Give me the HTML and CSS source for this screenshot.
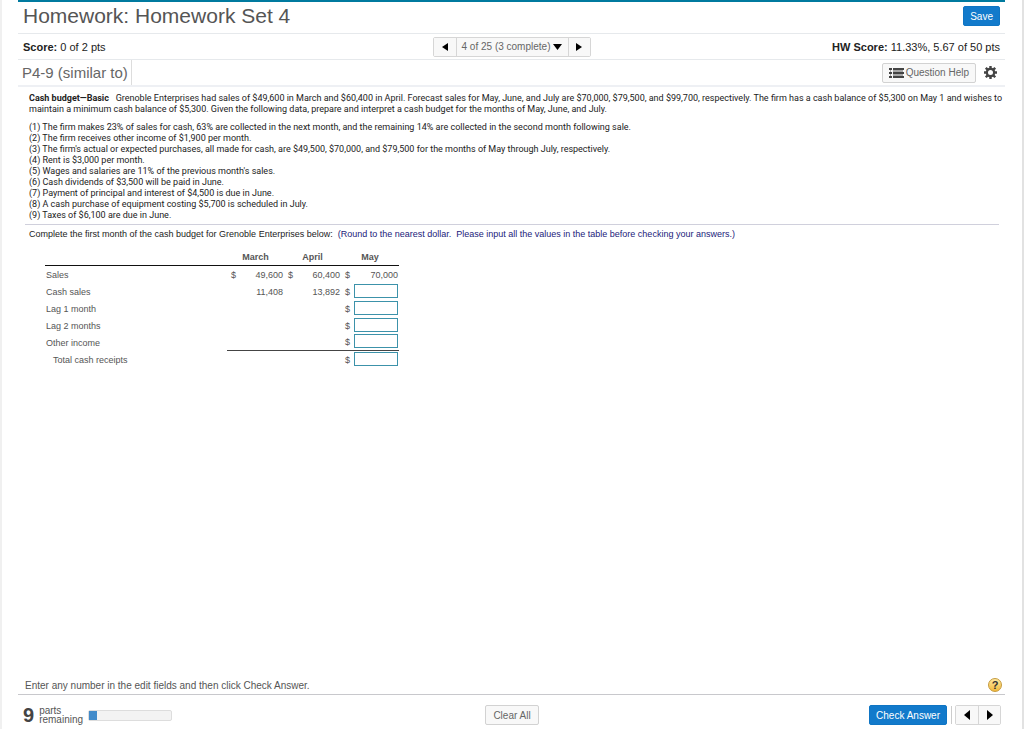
FILE: index.html
```html
<!DOCTYPE html>
<html lang="en">
<head>
  <meta charset="UTF-8">
  <meta name="viewport" content="width=device-width, initial-scale=1.0">
  <title>Homework Set 4</title>
  <link rel="stylesheet" href="styles.css">
</head>
<body>
  <div class="page">
    <header class="title-bar">
      <h1>Homework: Homework Set 4</h1>
      <button class="btn btn-primary" type="button">Save</button>
    </header>

    <div class="score-bar">
      <p><strong>Score:</strong> 0 of 2 pts</p>
      <div class="pager">
        <button type="button" aria-label="Previous question"><svg width="6" height="8" viewBox="0 0 6 8"><path d="M6 0v8L0 4z"/></svg></button>
        <button class="pager-menu" type="button">4 of 25 (3 complete) <svg width="9" height="6" viewBox="0 0 9 6"><path d="M0 0h9L4.500 6z"/></svg></button>
        <button type="button" aria-label="Next question"><svg width="6" height="8" viewBox="0 0 6 8"><path d="M0 0v8l6-4z"/></svg></button>
      </div>
      <p class="hw-score"><strong>HW Score:</strong> 11.33%, 5.67 of 50 pts</p>
    </div>

    <div class="question-bar">
      <h2>P4-9 (similar to)</h2>
      <div class="question-tools">
        <button class="btn help-btn" type="button">
          <svg width="15" height="10" viewBox="0 0 15 10"><path d="M0 0h3v2H0zM4 0h11v2H4zM0 4h3v2H0zM4 4h11v2H4zM0 8h3v2H0zM4 8h11v2H4z"/><path d="M1 0h1v10H1zM4 1h10v8H4z" opacity=".45"/></svg>
          Question Help
        </button>
        <button class="gear-btn" type="button" aria-label="Settings">
          <svg width="13" height="13" viewBox="0 0 14 14"><path fill-rule="evenodd" d="M5.700 0h2.600v2l1.400.5 1.500-1.400 1.800 1.800-1.500 1.500.5 1.300H14v2.600h-2l-.5 1.400 1.500 1.500-1.800 1.800-1.500-1.500-1.400.5V14H5.700v-2l-1.400-.5L2.800 13 1 11.200l1.500-1.500L2 8.300H0V5.700h2l.5-1.300L1 2.900l1.800-1.800 1.500 1.400L5.700 2zM7 4.300a2.700 2.700 0 1 0 0 5.400 2.700 2.700 0 0 0 0-5.400z"/></svg>
        </button>
      </div>
    </div>

    <main>
      <section class="problem">
        <p><strong>Cash budget—Basic</strong> &nbsp; Grenoble Enterprises had sales of $49,600 in March and $60,400 in April. Forecast sales for May, June, and July are $70,000, $79,500, and $99,700, respectively. The firm has a cash balance of $5,300 on May 1 and wishes to maintain a minimum cash balance of $5,300. Given the following data, prepare and interpret a cash budget for the months of May, June, and July.</p>
        <ul>
          <li>(1) The firm makes 23% of sales for cash, 63% are collected in the next month, and the remaining 14% are collected in the second month following sale.</li>
          <li>(2) The firm receives other income of $1,900 per month.</li>
          <li>(3) The firm's actual or expected purchases, all made for cash, are $49,500, $70,000, and $79,500 for the months of May through July, respectively.</li>
          <li>(4) Rent is $3,000 per month.</li>
          <li>(5) Wages and salaries are 11% of the previous month's sales.</li>
          <li>(6) Cash dividends of $3,500 will be paid in June.</li>
          <li>(7) Payment of principal and interest of $4,500 is due in June.</li>
          <li>(8) A cash purchase of equipment costing $5,700 is scheduled in July.</li>
          <li>(9) Taxes of $6,100 are due in June.</li>
        </ul>
      </section>

      <section class="answer">
        <p>Complete the first month of the cash budget for Grenoble Enterprises below: &nbsp;<span class="hint">(Round to the nearest dollar. &nbsp;Please input all the values in the table before checking your answers.)</span></p>

        <table class="budget">
          <colgroup>
            <col class="col-label">
            <col class="col-sign">
            <col class="col-value">
            <col class="col-sign">
            <col class="col-value">
            <col class="col-sign">
            <col class="col-input">
          </colgroup>
          <thead>
            <tr><td></td><td></td><th>March</th><td></td><th>April</th><td></td><th>May</th></tr>
          </thead>
          <tbody>
            <tr><th>Sales</th><td>$</td><td>49,600</td><td>$</td><td>60,400</td><td>$</td><td>70,000</td></tr>
            <tr><th><label for="cash">Cash sales</label></th><td></td><td>11,408</td><td></td><td>13,892</td><td>$</td><td class="field"><input type="text" id="cash"></td></tr>
            <tr><th><label for="lag1">Lag 1 month</label></th><td></td><td></td><td></td><td></td><td>$</td><td class="field"><input type="text" id="lag1"></td></tr>
            <tr><th><label for="lag2">Lag 2 months</label></th><td></td><td></td><td></td><td></td><td>$</td><td class="field"><input type="text" id="lag2"></td></tr>
            <tr><th><label for="other">Other income</label></th><td></td><td></td><td></td><td></td><td>$</td><td class="field"><input type="text" id="other"></td></tr>
            <tr class="total"><th><label for="total">Total cash receipts</label></th><td></td><td></td><td></td><td></td><td>$</td><td class="field"><input type="text" id="total"></td></tr>
          </tbody>
        </table>
      </section>
    </main>

    <div class="message">
      <p>Enter any number in the edit fields and then click Check Answer.</p>
      <button class="info-btn" type="button" aria-label="Help">?</button>
    </div>

    <footer>
      <div class="parts">
        <strong>9</strong>
        <span>parts<br>remaining</span>
        <div class="progress"><div class="progress-fill"></div></div>
      </div>
      <button class="btn" type="button">Clear All</button>
      <div class="actions">
        <button class="btn btn-primary" type="button">Check Answer</button>
        <div class="pager">
          <button type="button" aria-label="Previous part"><svg width="6" height="10" viewBox="0 0 6 10"><path d="M6 0v10L0 5z"/></svg></button>
          <button type="button" aria-label="Next part"><svg width="6" height="10" viewBox="0 0 6 10"><path d="M0 0v10l6-5z"/></svg></button>
        </div>
      </div>
    </footer>
  </div>
</body>
</html>
```

FILE: styles.css
```css
* {
  box-sizing: border-box;
}

body {
  font-family: "Liberation Sans", Arial, sans-serif;
  margin: 0;
  font-size: 11px;
  color: #222;
  background-color: #fff;
}

h1, h2, p, ul {
  margin: 0;
  padding: 0;
  font-weight: normal;
}

button {
  font-family: inherit;
  font-size: 10px;
  color: #666;
  cursor: pointer;
}

.page {
  display: flex;
  flex-direction: column;
  min-height: 100vh;
  padding: 0 17px 0 16px;
  border-left: 2px solid #f0f0f0;
  border-right: 2px solid #e2e2e2;
}

/* Top bars */
.title-bar, .score-bar, .question-bar {
  display: flex;
  justify-content: space-between;
  align-items: center;
  border-bottom: 1px solid #e6e9ec;
  padding: 0 5px;
}

.title-bar {
  height: 34px;
  padding-bottom: 3px;
  border-top: 2px solid #007a9f;
}

.title-bar h1 {
  font-size: 21px;
  line-height: 26px;
  color: #555;
}

.score-bar {
  display: grid;
  grid-template-columns: 1fr auto 1fr;
  height: 26px;
}

.score-bar p {
  line-height: 12px;
}

.score-bar .hw-score {
  text-align: right;
}

.question-bar {
  height: 27px;
  padding-left: 4px;
  border-bottom: 2px solid #eef0f4;
}

.question-bar h2 {
  font-size: 15px;
  line-height: 25px;
  color: #666;
  padding-right: 3px;
  border-right: 1px solid #ddd;
}

.question-tools {
  display: flex;
  align-items: center;
  gap: 5px;
}

/* Buttons */
.btn {
  height: 20px;
  padding: 0 7px;
  border: 1px solid #d2d2d2;
  border-radius: 2px;
  background-color: #f8f8f8;
}

.btn-primary {
  padding: 0 6px;
  color: #fff;
  border-color: #0f75c4;
  background-color: #127acb;
}

.help-btn {
  display: flex;
  align-items: center;
  gap: 2px;
  padding: 0 6px;
}

.help-btn svg, .gear-btn svg {
  fill: #444;
}

.gear-btn {
  display: flex;
  padding: 0 3px;
  border: none;
  background: none;
}

.pager {
  display: flex;
  height: 20px;
  border: 1px solid #d6d6d6;
  border-radius: 2px;
}

.pager button {
  display: flex;
  align-items: center;
  justify-content: center;
  gap: 3px;
  width: 22px;
  padding: 0;
  border: none;
  background-color: #f8f8f8;
}

.pager button + button {
  border-left: 1px solid #d6d6d6;
}

.pager .pager-menu {
  width: 112px;
}

/* Question */
main {
  flex: 1;
  padding: 6px 0 0 7px;
  font-size: 9px;
  line-height: 11px;
}

.problem {
  font-family: Roboto, Arial, sans-serif;
}

.problem p {
  padding-left: 4px;
}

.problem ul {
  list-style: none;
  margin: 7px 6px 0 0;
  padding: 0 4px 3px;
  border-bottom: 1px solid #d0d0dc;
}

.answer {
  padding: 4px 4px 0;
}

.hint {
  color: #22227a;
}

.budget {
  table-layout: fixed;
  width: 354px;
  margin: 11px 0 0 16px;
  border-collapse: collapse;
  color: #555;
}

.budget th, .budget td {
  height: 17px;
  padding: 3px 1px 0;
  line-height: 11px;
  text-align: right;
}

.budget thead th, .budget thead td {
  height: 14px;
  padding: 0 10px 0 0;
  text-align: center;
}

.budget thead tr {
  border-bottom: 1px solid #111;
}

.budget tbody th {
  font-weight: normal;
  text-align: left;
}

.budget .total td {
  border-top: 1px solid #444;
}

.budget .total th {
  padding-left: 8px;
}

.budget .field {
  padding-top: 0;
}

.col-label {
  width: 182px;
}

.col-sign {
  width: 10px;
}

.col-value {
  width: 47px;
}

.budget input {
  display: block;
  width: 44px;
  height: 14px;
  margin-left: auto;
  padding: 0 2px;
  border: 1px solid #3c92aa;
  font-family: inherit;
  font-size: 9px;
}

/* Bottom bars */
.message {
  display: flex;
  justify-content: space-between;
  align-items: center;
  height: 19px;
  padding: 0 3px 0 7px;
  border-bottom: 1px solid #c8c8cc;
  font-size: 10px;
  color: #555;
}

.info-btn {
  width: 14px;
  height: 14px;
  padding: 0;
  border: 1px solid #c59a3c;
  border-radius: 50%;
  background: linear-gradient(#ffe9a0, #f3b93c);
  font-size: 11px;
  font-weight: bold;
  line-height: 12px;
  color: #333;
}

footer {
  display: grid;
  grid-template-columns: 1fr auto 1fr;
  align-items: center;
  height: 34px;
  padding: 6px 4px 0 5px;
}

.parts {
  display: flex;
  align-items: center;
  gap: 5px;
  font-size: 10px;
  line-height: 9px;
  color: #555;
}

.parts strong {
  font-size: 20px;
  color: #444;
}

.progress {
  width: 84px;
  height: 11px;
  border: 1px solid #ddd;
  border-radius: 2px;
  background-color: #f3f3f3;
}

.progress-fill {
  width: 10%;
  height: 100%;
  background-color: #428bca;
}

.actions {
  display: flex;
  justify-content: flex-end;
  gap: 5px;
}

.actions .pager {
  position: relative;
  margin-left: 3px;
}

.actions .pager::before {
  content: "";
  position: absolute;
  left: -5px;
  width: 1px;
  height: 18px;
  background-color: #ccc;
}
```
